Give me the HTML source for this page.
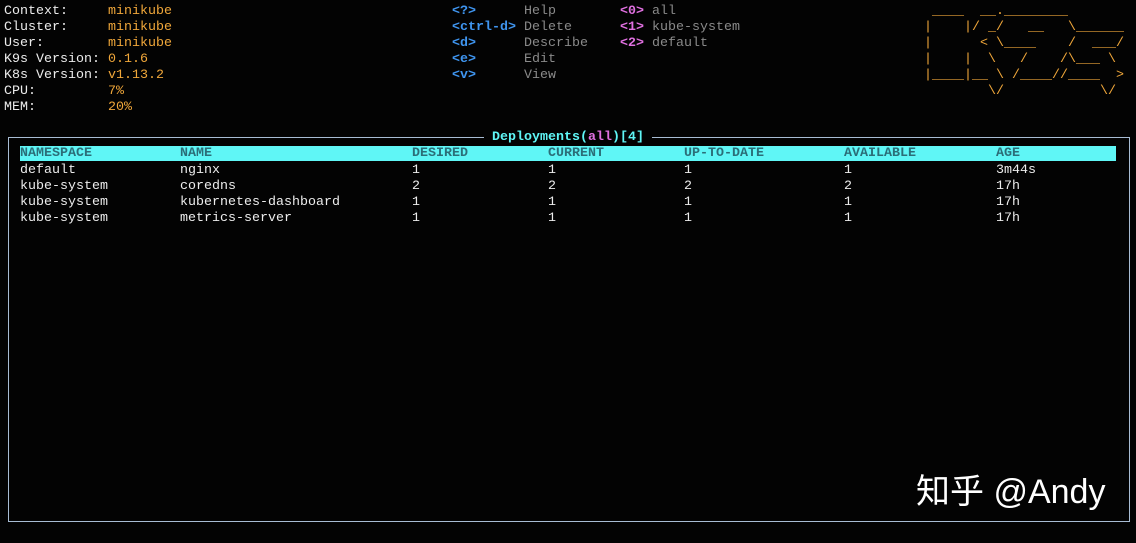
<!DOCTYPE html>
<html><head><meta charset="utf-8"><style>
*{margin:0;padding:0}
body{width:1136px;height:543px;background:#030303;position:relative;overflow:hidden;font-family:"Liberation Mono",monospace;font-size:13.33px;line-height:16px;color:#ececec}
.a{position:absolute;white-space:pre}
.o{color:#f0a73a}
.k{color:#3f95f0;font-weight:bold}
.g{color:#8a8a8a}
.m{color:#e070e0;font-weight:bold}
.box{position:absolute;left:8px;top:137px;width:1120px;height:383px;border:1px solid #a8bcd4}
.hdr{position:absolute;left:20px;top:146px;width:1096px;height:15px;background:#5ff6f6}
.h{color:#2b6e78;font-weight:bold}
</style></head><body>
<div class="a" style="left:4px;top:4px">Context:
Cluster:
User:
K9s Version:
K8s Version:
CPU:
MEM:</div>
<div class="a o" style="left:108px;top:4px">minikube
minikube
minikube
0.1.6
v1.13.2
7%
20%</div>
<div class="a k" style="left:452px;top:4px">&lt;?&gt;
&lt;ctrl-d&gt;
&lt;d&gt;
&lt;e&gt;
&lt;v&gt;</div>
<div class="a g" style="left:524px;top:4px">Help
Delete
Describe
Edit
View</div>
<div class="a m" style="left:620px;top:4px">&lt;0&gt;
&lt;1&gt;
&lt;2&gt;</div>
<div class="a g" style="left:652px;top:4px">all
kube-system
default</div>
<div class="a o" style="left:924px;top:4px"> ____  __.________       
|    |/ _/   __   \______
|      &lt; \____    /  ___/
|    |  \   /    /\___ \ 
|____|__ \ /____//____  &gt;
        \/            \/ </div>
<div class="box"></div>
<div class="a" style="left:484px;top:130px;background:#030303;padding:0 8px;font-weight:bold;color:#5ff6f6">Deployments(<span style="color:#e070e0">all</span>)[4]</div>
<div class="hdr"></div>
<div class="a h" style="left:20px;top:146px">NAMESPACE</div>
<div class="a h" style="left:180px;top:146px">NAME</div>
<div class="a h" style="left:412px;top:146px">DESIRED</div>
<div class="a h" style="left:548px;top:146px">CURRENT</div>
<div class="a h" style="left:684px;top:146px">UP-TO-DATE</div>
<div class="a h" style="left:844px;top:146px">AVAILABLE</div>
<div class="a h" style="left:996px;top:146px">AGE</div>
<div class="a" style="left:20px;top:163px">default
kube-system
kube-system
kube-system</div>
<div class="a" style="left:180px;top:163px">nginx
coredns
kubernetes-dashboard
metrics-server</div>
<div class="a" style="left:412px;top:163px">1
2
1
1</div>
<div class="a" style="left:548px;top:163px">1
2
1
1</div>
<div class="a" style="left:684px;top:163px">1
2
1
1</div>
<div class="a" style="left:844px;top:163px">1
2
1
1</div>
<div class="a" style="left:996px;top:163px">3m44s
17h
17h
17h</div>
<div class="a" style="left:916px;top:470px;font-family:'Liberation Sans','Noto Sans CJK SC',sans-serif;font-size:34px;line-height:44px;color:#fff">知乎 @Andy</div>
</body></html>
